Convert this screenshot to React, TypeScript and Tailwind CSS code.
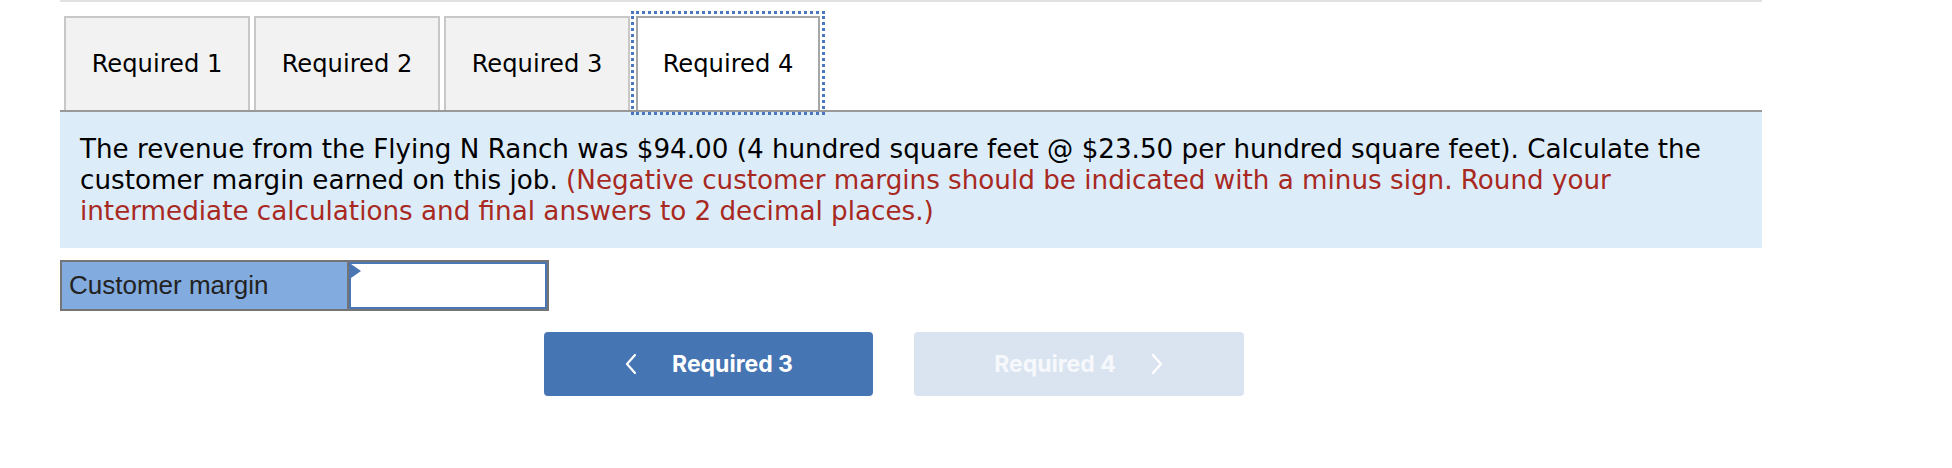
import React from 'react';

const tabs = ['Required 1', 'Required 2', 'Required 3', 'Required 4'];

function Chevron({ dir }: { dir: 'left' | 'right' }) {
  return (
    <svg width="14" height="22" viewBox="0 0 14 22" fill="none" className="shrink-0">
      <polyline
        points={dir === 'left' ? '11,2 3,11 11,20' : '3,2 11,11 3,20'}
        stroke="white"
        strokeWidth="2.2"
        strokeLinecap="round"
        strokeLinejoin="round"
      />
    </svg>
  );
}

export default function App() {
  return (
    <div className="w-[1952px] h-[468px] bg-white">
      <div className="ml-[60px] w-[1702px]">
        {/* top rule */}
        <div className="h-[2px] bg-[#e1e1e1]" />

        {/* tabs */}
        <div className="flex items-end gap-[4px] pl-[4px] pt-[14px] border-b-2 border-[#999999]">
          {tabs.map((t, i) => {
            const active = i === 3;
            return (
              <div
                key={t}
                className={
                  active
                    ? 'ml-[2px] flex h-[94px] w-[184px] items-center justify-center border-2 border-b-0 border-[#a6a6a6] bg-white outline-[3px] outline-dotted outline-offset-[2px] outline-[#4a78c0]'
                    : 'flex h-[94px] w-[186px] items-center justify-center border-2 border-b-0 border-[#c8c8c8] bg-[#f2f2f2]'
                }
              >
                <span className="text-[24.2px] text-black font-['DejaVu_Sans',sans-serif]">{t}</span>
              </div>
            );
          })}
        </div>

        {/* question */}
        <div className="bg-[#ddecf9] px-[20px] pt-[22px] pb-[21px] text-[26.2px] leading-[31px] font-['DejaVu_Sans',sans-serif] text-black">
          The revenue from the Flying N Ranch was $94.00 (4 hundred square feet @ $23.50 per hundred square feet).
          Calculate the customer margin earned on this job.{' '}
          <span className="text-[#a8291f]">
            (Negative customer margins should be indicated with a minus sign. Round your intermediate calculations and
            final answers to 2 decimal places.)
          </span>
        </div>

        {/* answer row */}
        <div className="mt-[12px] flex h-[51px] w-[489px] border-2 border-[#747474]">
          <div className="flex w-[287px] items-center border-r-2 border-[#747474] bg-[#82abdf] pl-[7px] text-[26px] text-[#222] font-['Liberation_Sans',Arial,sans-serif]">
            Customer margin
          </div>
          <div className="relative flex-1 border-2 border-[#4a76b4] bg-white">
            <div className="absolute left-0 top-0 h-0 w-0 border-y-[7px] border-l-[10px] border-y-transparent border-l-[#4a76b4]" />
          </div>
        </div>

        {/* nav buttons */}
        <div className="mt-[21px] ml-[484px] flex gap-[41px] font-['Inter',sans-serif]">
          <button className="flex h-[64px] w-[329px] items-center justify-center gap-[34px] rounded-[4px] bg-[#4675b3] text-[23px] font-bold text-white">
            <Chevron dir="left" />
            <span>Required 3</span>
          </button>
          <button className="flex h-[64px] w-[330px] items-center justify-center gap-[34px] rounded-[4px] bg-[#dae4f0] text-[23px] font-bold text-[#f6f8fc]">
            <span>Required 4</span>
            <Chevron dir="right" />
          </button>
        </div>
      </div>
    </div>
  );
}
